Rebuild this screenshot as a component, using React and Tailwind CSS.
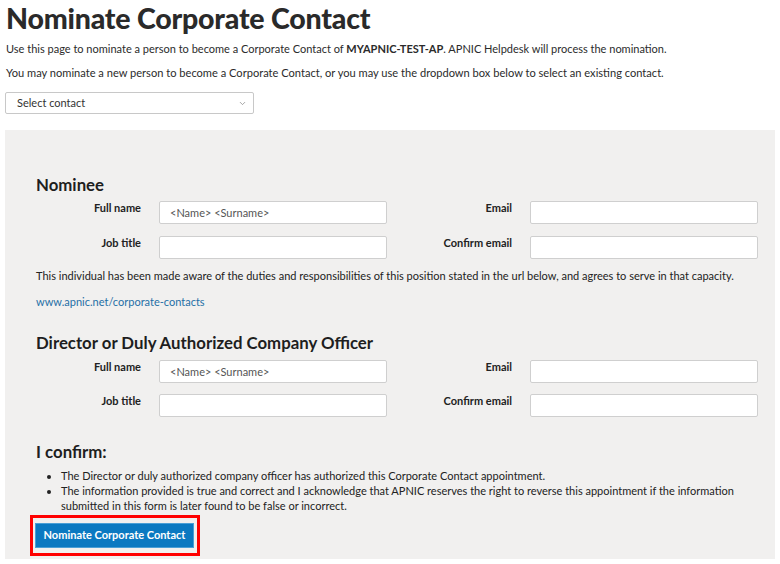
import { ChevronDown } from "lucide-react";

const font = { fontFamily: "Lato, 'Noto Sans', sans-serif" };

const Field = ({ label, placeholder }) => (
  <>
    <label className="text-right text-[11px] font-bold text-[#222] leading-[14px]">{label}</label>
    <input
      placeholder={placeholder}
      className="h-[23px] w-[228px] bg-white border border-[#cfcfcf] rounded-[2px] px-[10px] text-[11px] placeholder:text-[#555] outline-none"
    />
  </>
);

const PersonForm = ({ title, gap, top }) => (
  <div>
    <h2 className="text-[16.8px] font-bold text-[#1e1e1e] leading-[20px]">{title}</h2>
    <div className={`grid grid-cols-[105px_228px_107px_228px] gap-x-[18px] ${gap} ${top}`}>
      <Field label="Full name" placeholder="<Name> <Surname>" />
      <Field label="Email" />
      <Field label="Job title" />
      <Field label="Confirm email" />
    </div>
  </div>
);

export default function App() {
  return (
    <div className="bg-white min-h-[564px] w-[780px] px-[5px] text-[#2b2b2b]" style={font}>
      <h1 className="text-[28.5px] font-black leading-[34px] pt-[1px] pl-[1px] text-[#2a2a2a] tracking-[-0.2px]">
        Nominate Corporate Contact
      </h1>
      <p className="text-[11px] leading-[14px] mt-[7px] pl-[1px]">
        Use this page to nominate a person to become a Corporate Contact of <b>MYAPNIC-TEST-AP</b>. APNIC Helpdesk will process the nomination.
      </p>
      <p className="text-[11.1px] leading-[14px] mt-[10px] pl-[1px]">
        You may nominate a new person to become a Corporate Contact, or you may use the dropdown box below to select an existing contact.
      </p>
      <div className="mt-[12px] w-[249px] h-[22px] border border-[#c8c8c8] rounded-[2px] flex items-center justify-between pl-[11px] pr-[6px] text-[11px] text-[#333]">
        <span>Select contact</span>
        <ChevronDown size={9} strokeWidth={2} className="text-[#888]" />
      </div>

      <div className="mt-[16px] bg-[#f1f0ef] h-[429px] pl-[31px] pr-[20px] pt-[45px]">
        <PersonForm title="Nominee" gap="gap-y-[12px]" top="mt-[6px]" />
        <p className="text-[11px] leading-[15px] mt-[9px] text-[#222]">
          This individual has been made aware of the duties and responsibilities of this position stated in the url below, and agrees to serve in that capacity.
        </p>
        <a href="#" className="block text-[11px] leading-[15px] mt-[11px] text-[#1f6fa6]">
          www.apnic.net/corporate-contacts
        </a>

        <div className="mt-[24px]">
          <PersonForm title="Director or Duly Authorized Company Officer" gap="gap-y-[11px]" top="mt-[7px]" />
        </div>

        <h2 className="mt-[25px] text-[16.8px] font-bold text-[#1e1e1e] leading-[20px]">I confirm:</h2>
        <ul className="mt-[6px] list-disc pl-[25px] text-[11px] leading-[15px] text-[#222]">
          <li>The Director or duly authorized company officer has authorized this Corporate Contact appointment.</li>
          <li>
            The information provided is true and correct and I acknowledge that APNIC reserves the right to reverse this appointment if the information
            <br />
            submitted in this form is later found to be false or incorrect.
          </li>
        </ul>

        <div className="mt-[2px] -ml-[6px] inline-flex border-[3px] border-[#ff0000] pl-[2px] pr-[3px] pt-[5px] pb-[5px]">
          <button className="h-[25px] w-[159px] bg-[#0b79c1] border border-[#4a9fd6] text-white text-[11px] font-bold">
            Nominate Corporate Contact
          </button>
        </div>
      </div>
    </div>
  );
}
